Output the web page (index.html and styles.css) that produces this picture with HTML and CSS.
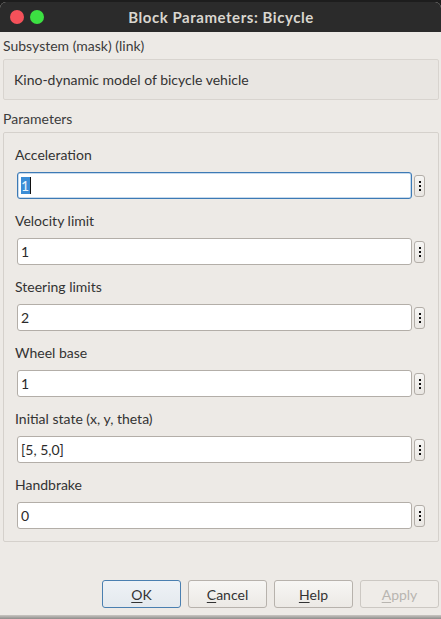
FILE: index.html
```html
<!DOCTYPE html>
<html>
<head>
<meta charset="utf-8">
<link rel="stylesheet" href="styles.css">
</head>
<body>
<div class="topstrip"></div>
<div class="window">
  <div class="titlebar">
    <div class="lights">
      <span class="light red"></span>
      <span class="light green"></span>
    </div>
    <div class="title">Block Parameters: Bicycle</div>
  </div>
  <div class="content">
    <div class="caption">Subsystem (mask) (link)</div>
    <div class="desc">Kino-dynamic model of bicycle vehicle</div>
    <div class="caption params-cap">Parameters</div>
    <div class="group">
      <div class="field">
        <div class="label">Acceleration</div>
        <div class="row">
          <div class="input focused"><span class="sel">1</span><span class="caret"></span></div>
          <div class="more"><i></i><i></i><i></i></div>
        </div>
      </div>
      <div class="field">
        <div class="label">Velocity limit</div>
        <div class="row">
          <div class="input">1</div>
          <div class="more"><i></i><i></i><i></i></div>
        </div>
      </div>
      <div class="field">
        <div class="label">Steering limits</div>
        <div class="row">
          <div class="input">2</div>
          <div class="more"><i></i><i></i><i></i></div>
        </div>
      </div>
      <div class="field">
        <div class="label">Wheel base</div>
        <div class="row">
          <div class="input">1</div>
          <div class="more"><i></i><i></i><i></i></div>
        </div>
      </div>
      <div class="field">
        <div class="label">Initial state (x, y, theta)</div>
        <div class="row">
          <div class="input">[5, 5,0]</div>
          <div class="more"><i></i><i></i><i></i></div>
        </div>
      </div>
      <div class="field">
        <div class="label">Handbrake</div>
        <div class="row">
          <div class="input">0</div>
          <div class="more"><i></i><i></i><i></i></div>
        </div>
      </div>
    </div>
    <div class="spacer"></div>
    <div class="buttons">
      <div class="btn default"><u>O</u>K</div>
      <div class="btn"><u>C</u>ancel</div>
      <div class="btn"><u>H</u>elp</div>
      <div class="btn disabled"><u>A</u>pply</div>
    </div>
  </div>
</div>
<div class="bottomshade"></div>
</body>
</html>
```

FILE: styles.css
```css
html, body {
  margin: 0;
  padding: 0;
}
body {
  width: 441px;
  height: 619px;
  overflow: hidden;
  background: #1d1d1d;
  font-family: Lato, "Noto Sans", sans-serif;
  font-size: 14px;
  color: #3c3c3c;
  display: flex;
  flex-direction: column;
}
.topstrip {
  height: 2px;
  background: #1d1d1d;
  flex: none;
}
.window {
  flex: 1;
  display: flex;
  flex-direction: column;
  background: #edeae6;
  border-radius: 6px 6px 0 0;
  overflow: hidden;
}
.titlebar {
  height: 30px;
  flex: none;
  background: #2b2b2b;
  position: relative;
  display: flex;
  align-items: center;
  justify-content: center;
}
.lights {
  position: absolute;
  left: 10px;
  top: 8px;
  display: flex;
  gap: 6px;
}
.light {
  width: 14px;
  height: 14px;
  border-radius: 50%;
  display: block;
}
.red { background: #f4515a; }
.green { background: #3ce042; }
.title {
  color: #d9d6cf;
  font-weight: bold;
  font-size: 15px;
  letter-spacing: 0.55px;
  margin-left: 1px;
}
.content {
  flex: 1;
  display: flex;
  flex-direction: column;
  padding: 6px 2px 3px 3px;
}
.caption {
  line-height: 16px;
  height: 16px;
}
.desc {
  margin-top: 5px;
  height: 39px;
  border: 1px solid #d8d4cf;
  border-radius: 2px;
  background: #e9e6e2;
  display: flex;
  align-items: center;
  padding-left: 10px;
  color: #333;
}
.params-cap {
  margin-top: 11px;
}
.group {
  margin-top: 5px;
  border: 1px solid #d5d1cc;
  border-radius: 2px;
  padding: 14px 13px 12px 11px;
  display: flex;
  flex-direction: column;
  gap: 14px;
}
.field {
  display: flex;
  flex-direction: column;
}
.label {
  line-height: 16px;
  height: 16px;
  color: #333;
}
.row {
  margin-top: 9px;
  margin-left: 2px;
  display: flex;
  align-items: center;
  gap: 2px;
}
.input {
  flex: 1;
  height: 25px;
  border: 1px solid #b3aea8;
  border-radius: 3px;
  background: #fff;
  display: flex;
  align-items: center;
  padding-left: 3px;
  color: #2a2a2a;
  box-sizing: content-box;
}
.input.focused {
  border-color: #3d7ab5;
  box-shadow: inset 0 0 0 0.5px #8fb6db;
}
.sel {
  background: #3b8dd6;
  color: #e8f2fb;
  line-height: 17px;
  padding: 0 1px 0 0;
}
.caret {
  width: 1px;
  height: 17px;
  background: #111;
}
.more {
  width: 9px;
  height: 20px;
  border: 1px solid #b3aea8;
  border-radius: 3px;
  background: linear-gradient(#f6f5f3, #e9e6e2);
  display: flex;
  flex-direction: column;
  align-items: center;
  justify-content: center;
  gap: 2px;
}
.more i {
  display: block;
  width: 2px;
  height: 2px;
  background: #111;
}
.spacer {
  flex: 1;
}
.buttons {
  display: flex;
  justify-content: flex-end;
  gap: 7px;
  margin-bottom: 4px;
}
.btn {
  width: 77px;
  height: 26px;
  border: 1px solid #b7b2ac;
  border-radius: 3px;
  background: linear-gradient(#f7f6f4, #ece9e5);
  display: flex;
  align-items: center;
  justify-content: center;
  color: #333;
}
.btn u {
  text-decoration: underline;
  text-underline-offset: 2px;
}
.btn.default {
  border-color: #4a7fb0;
  background: linear-gradient(#eef2f6, #e4e9ee);
}
.btn.disabled {
  color: #b8b5b0;
  border-color: #ccc8c3;
  background: #efece8;
}
.bottomshade {
  height: 4px;
  flex: none;
  background: linear-gradient(#c9c6c2, #8e8c8a);
}
```
